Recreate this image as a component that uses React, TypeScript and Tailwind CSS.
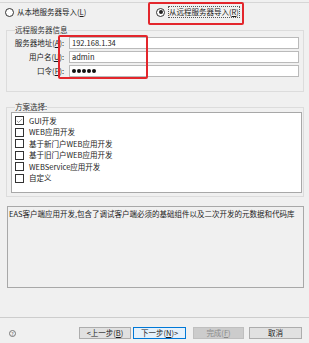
import { Check } from "lucide-react"

const schemes = ["GUI开发", "WEB应用开发", "基于新门户WEB应用开发", "基于旧门户WEB应用开发", "WEBService应用开发", "自定义"]

function Radio({ checked, label, mnemonic, focused }: { checked?: boolean; label: string; mnemonic: string; focused?: boolean }) {
  return (
    <div className="flex items-center gap-[3px]">
      <span className="flex h-[9px] w-[9px] items-center justify-center rounded-full border border-[#333] bg-white">
        {checked && <span className="h-[4px] w-[4px] rounded-full bg-[#222]" />}
      </span>
      <span className={focused ? "border border-dotted border-[#555] leading-[10px]" : "leading-[10px]"}>
        {label}(<span className="underline">{mnemonic}</span>)
      </span>
    </div>
  )
}

function Field({ label, mnemonic, children }: { label: string; mnemonic: string; children: React.ReactNode }) {
  return (
    <div className="flex h-[12px] items-center">
      <div className="w-[53px] text-right">
        {label}(<span className="underline">{mnemonic}</span>):
      </div>
      <div className="ml-[5px] flex h-[12px] flex-1 items-center border border-[#bababa] bg-white pl-[2px]">{children}</div>
    </div>
  )
}

export default function App() {
  return (
    <div className="relative h-[343px] w-[309px] overflow-hidden bg-[#f0f0f0] font-['Noto_Sans_CJK_SC',sans-serif] text-[7.5px] leading-[10px] text-[#1b1b1b]">
      <div className="mt-[2px] h-px bg-[#d6d6d6]" />

      <div className="flex h-[18px] items-center">
        <div className="w-[156px] pl-[5px]">
          <Radio label="从本地服务器导入" mnemonic="L" />
        </div>
        <Radio checked focused label="从远程服务器导入" mnemonic="R" />
      </div>

      <fieldset className="ml-[6px] mt-[4px] w-[298px] border border-[#dcdcdc] pb-[14px] pl-[4px] pr-[4px]">
        <legend className="ml-[4px] text-[#333]">远程服务器信息</legend>
        <div className="flex flex-col gap-[2px] pt-[2px]">
          <Field label="服务器地址" mnemonic="A">
            192.168.1.34
          </Field>
          <Field label="用户名" mnemonic="U">
            admin
          </Field>
          <Field label="口令" mnemonic="P">
            <div className="flex gap-px">
              {[0, 1, 2, 3, 4].map((i) => (
                <span key={i} className="h-[4px] w-[4px] rounded-full bg-[#111]" />
              ))}
            </div>
          </Field>
        </div>
      </fieldset>

      <fieldset className="ml-[6px] mt-[10px] w-[298px] border border-[#dcdcdc] pb-[3px] pl-[4px] pr-px">
        <legend className="ml-[4px] text-[#333]">方案选择:</legend>
        <div className="h-[81px] border border-[#a8a8a8] bg-white pl-[3px] pt-[2px]">
          {schemes.map((s, i) => (
            <div key={s} className="flex h-[11.5px] items-center gap-[5px]">
              <span className="flex h-[9px] w-[9px] items-center justify-center border border-[#333] bg-white">
                {i === 0 && <Check size={8} strokeWidth={1.5} className="text-[#222]" />}
              </span>
              <span>{s}</span>
            </div>
          ))}
        </div>
      </fieldset>

      <div className="ml-[7px] mt-[9px] h-[82px] w-[297px] border border-[#a8a8a8] bg-[#f0f0f0] pl-px pt-[2px]">
        EAS客户端应用开发,包含了调试客户端必须的基础组件以及二次开发的元数据和代码库
      </div>

      <div className="mt-[29px] h-px bg-[#cdcdcd]" />

      <div className="mt-[9px] flex h-[12px] items-center pr-[7px]">
        <span className="ml-[9px] flex h-[7px] w-[7px] items-center justify-center rounded-full border border-[#777] text-[5px] leading-none text-[#666]">
          ?
        </span>
        <div className="ml-auto flex h-[12px]">
          <button className="flex w-[52px] items-center justify-center border border-[#adadad] bg-[#e1e1e1] leading-none">
            &lt;上一步(<span className="underline">B</span>)
          </button>
          <button className="ml-[2px] flex w-[53px] items-center justify-center border border-[#0078d7] bg-[#e5f1fb] leading-none">
            下一步(<span className="underline">N</span>)&gt;
          </button>
          <button className="ml-[7px] flex w-[51px] items-center justify-center border border-[#bfbfbf] bg-[#cccccc] leading-none text-[#8a8a8a]">
            完成(<span className="underline">F</span>)
          </button>
          <button className="ml-[5px] flex w-[53px] items-center justify-center border border-[#adadad] bg-[#e1e1e1] leading-none">
            取消
          </button>
        </div>
      </div>

      <div className="absolute left-[148px] top-[2px] h-[23px] w-[96px] rounded-[2px] border-2 border-[#e3262c]" />
      <div className="absolute left-[58px] top-[35px] h-[44px] w-[90px] rounded-[2px] border-2 border-[#e3262c]" />
    </div>
  )
}
